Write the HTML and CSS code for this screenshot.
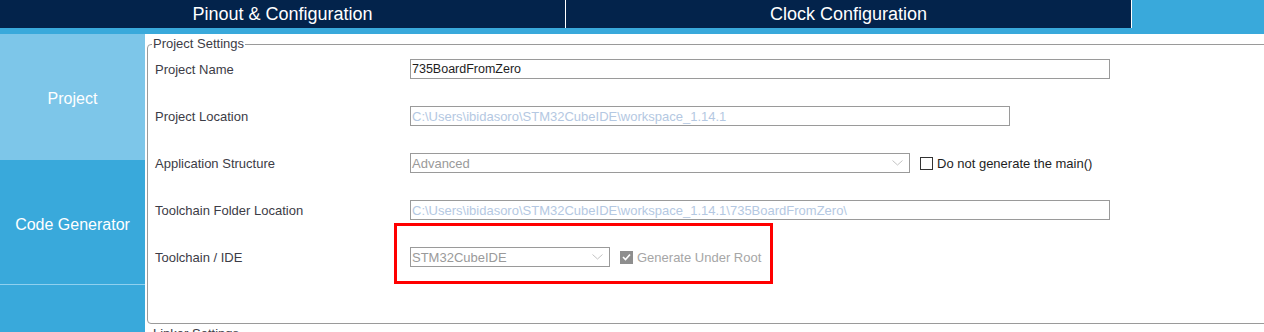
FILE: index.html
```html
<!DOCTYPE html>
<html lang="en">
<head>
    <meta charset="UTF-8">
    <meta name="viewport" content="width=device-width, initial-scale=1.0">
    <title>Project Manager</title>
    <link rel="stylesheet" href="styles.css">
</head>
<body>
    <div class="tabs">
        <div class="tab">Pinout &amp; Configuration</div>
        <div class="tab">Clock Configuration</div>
        <div class="tab-rest"></div>
    </div>
    <div class="strip"></div>

    <div class="main">
        <div class="sidebar">
            <div class="side-item active">Project</div>
            <div class="side-item">Code Generator</div>
            <div class="side-item"></div>
        </div>

        <div class="content">
            <fieldset class="group">
                <legend>Project Settings</legend>

                <div class="row">
                    <label class="label">Project Name</label>
                    <input class="field field-wide" type="text" value="735BoardFromZero">
                </div>

                <div class="row">
                    <label class="label">Project Location</label>
                    <input class="field field-mid disabled" type="text" value="C:\Users\ibidasoro\STM32CubeIDE\workspace_1.14.1" readonly>
                </div>

                <div class="row">
                    <label class="label">Application Structure</label>
                    <div class="select select-wide">
                        <span>Advanced</span>
                        <svg class="chevron" width="11" height="6" viewBox="0 0 11 6"><polyline points="0.5,0.5 5.5,5 10.5,0.5" fill="none" stroke="#c4c4c4" stroke-width="1"/></svg>
                    </div>
                    <span class="check">
                        <span class="box"></span>
                        <span class="check-text">Do not generate the main()</span>
                    </span>
                </div>

                <div class="row">
                    <label class="label">Toolchain Folder Location</label>
                    <input class="field field-wide disabled" type="text" value="C:\Users\ibidasoro\STM32CubeIDE\workspace_1.14.1\735BoardFromZero\" readonly>
                </div>

                <div class="row last">
                    <label class="label">Toolchain / IDE</label>
                    <div class="controls">
                        <div class="select select-small">
                            <span>STM32CubeIDE</span>
                            <svg class="chevron" width="11" height="6" viewBox="0 0 11 6"><polyline points="0.5,0.5 5.5,5 10.5,0.5" fill="none" stroke="#c4c4c4" stroke-width="1"/></svg>
                        </div>
                        <span class="check muted">
                            <span class="box checked">
                                <svg width="9" height="8" viewBox="0 0 9 8"><polyline points="1,4 3.5,6.5 8,1.5" fill="none" stroke="#fff" stroke-width="1.6"/></svg>
                            </span>
                            <span class="check-text">Generate Under Root</span>
                        </span>
                        <div class="highlight"></div>
                    </div>
                </div>
            </fieldset>

            <fieldset class="group">
                <legend>Linker Settings</legend>
            </fieldset>
        </div>
    </div>
</body>
</html>
```

FILE: styles.css
```css
body {
    margin: 0;
    font-family: "Liberation Sans", Arial, sans-serif;
    background-color: white;
    height: 332px;
    overflow: hidden;
}
.tabs {
    display: flex;
    height: 28px;
    background-color: #03234b;
}
.tab {
    width: 565px;
    border-right: 1px solid white;
    color: white;
    font-size: 18px;
    line-height: 28px;
    text-align: center;
}
.tab-rest {
    flex: 1;
    background-color: #39a9db;
}
.strip {
    height: 6px;
    background-color: #39a9db;
}
.main {
    display: flex;
}
.sidebar {
    width: 145px;
    flex-shrink: 0;
    background-color: #39a9db;
    height: 298px;
}
.side-item {
    box-sizing: border-box;
    height: 126px;
    padding-top: 4px;
    display: flex;
    align-items: center;
    justify-content: center;
    color: white;
    font-size: 16px;
}
.side-item + .side-item {
    height: 125px;
    padding-top: 6px;
    border-bottom: 1px solid #8fd0ef;
}
.side-item:last-child {
    border-bottom: none;
}
.side-item.active {
    background-color: #7dc6e9;
}
.content {
    flex: 1;
    overflow: hidden;
    padding-left: 2px;
}
.group {
    width: 1200px;
    margin: 3px 0 0 0;
    padding: 8px 0 56px 7px;
    border: 1px solid #9a9a9a;
    border-radius: 4px;
}
.group legend {
    margin-left: -3px;
    padding: 0 1px;
    font-size: 13px;
    line-height: 14px;
    color: #3c3c46;
}
.row {
    display: flex;
    align-items: center;
    height: 20px;
    margin-bottom: 27px;
}
.row.last {
    margin-bottom: 0;
}
.label {
    width: 255px;
    flex-shrink: 0;
    padding-top: 1px;
    font-size: 13px;
    color: #3c3c46;
}
.field {
    box-sizing: border-box;
    height: 20px;
    margin: 0;
    padding: 0 1px;
    border: 1px solid #9a9a9a;
    border-radius: 0;
    font-family: inherit;
    font-size: 12.5px;
    color: #1e1e1e;
    outline: none;
}
.field.disabled {
    color: #b4c8e2;
    font-size: 13px;
}
.field-wide {
    width: 700px;
}
.field-mid {
    width: 600px;
}
.select {
    box-sizing: border-box;
    height: 20px;
    display: flex;
    align-items: center;
    justify-content: space-between;
    padding: 0 6px 0 1px;
    border: 1px solid #9a9a9a;
    font-size: 13px;
    color: #9a9a9a;
}
.select-wide {
    width: 500px;
}
.select-small {
    width: 200px;
}
.chevron {
    display: block;
}
.controls {
    position: relative;
    display: flex;
    align-items: center;
}
.check {
    display: flex;
    align-items: center;
    margin-left: 10px;
    font-size: 13px;
    color: #1e1e1e;
}
.check.muted {
    color: #a6a6a6;
}
.box {
    box-sizing: border-box;
    width: 13px;
    height: 13px;
    border: 1px solid #333;
    background-color: white;
    margin-right: 4px;
    display: flex;
    align-items: center;
    justify-content: center;
}
.box.checked {
    border-color: #8e8e8e;
    background-color: #8e8e8e;
}
.highlight {
    position: absolute;
    left: -16px;
    top: -24px;
    width: 379px;
    height: 61px;
    box-sizing: border-box;
    border: 3px solid #ff0000;
}
```
